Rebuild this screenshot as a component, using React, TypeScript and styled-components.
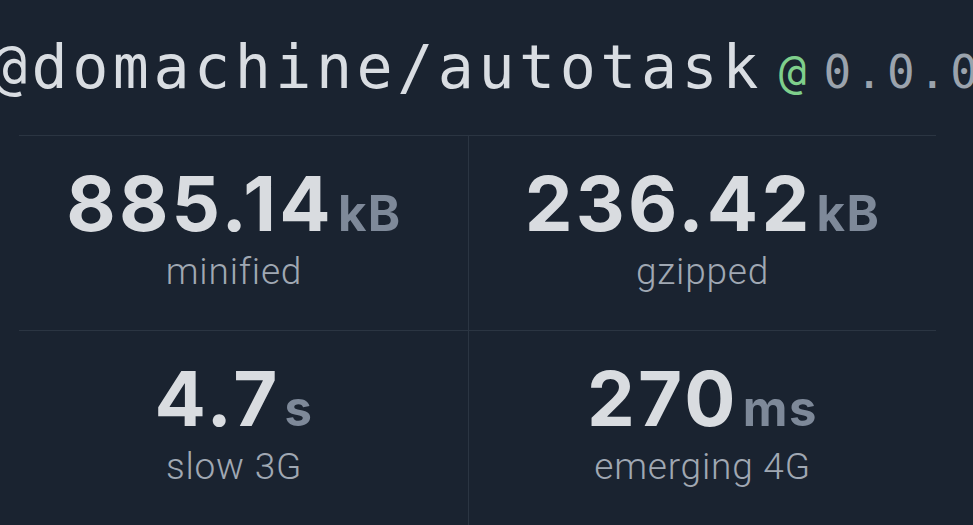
import React from "react";
import styled, { createGlobalStyle } from "styled-components";

const Global = createGlobalStyle`
  html, body {
    margin: 0;
    padding: 0;
    background: #1a2330;
    overflow: hidden;
  }
  #root {
    width: 973px;
    height: 525px;
    overflow: hidden;
    background: #1a2330;
  }
`;

const Page = styled.div`
  width: 973px;
  height: 525px;
  overflow: hidden;
  background: #1a2330;
  display: flex;
  flex-direction: column;
`;

const Header = styled.h1`
  margin: 0;
  height: 136px;
  box-sizing: border-box;
  padding-top: 37px;
  display: flex;
  justify-content: center;
  align-items: baseline;
  white-space: nowrap;
  font-family: "DejaVu Sans Mono", "Liberation Mono", monospace;
  font-weight: 400;
`;

const PackageName = styled.span`
  flex: none;
  font-size: 60px;
  line-height: 60px;
  letter-spacing: 4.5px;
  color: #d9dde2;
`;

const Separator = styled.span`
  flex: none;
  font-size: 46px;
  line-height: 46px;
  color: #7fcf8c;
  margin: 0 17px 0 16px;
`;

const Version = styled.span`
  flex: none;
  font-size: 46px;
  line-height: 46px;
  letter-spacing: 4px;
  color: #9ba3ad;
`;

const Stats = styled.div`
  width: 936px;
  display: flex;
  flex-direction: column;
`;

const Divider = styled.div`
  height: 1px;
  margin-left: 19px;
  background: #2b3542;
`;

const Row = styled.div`
  display: grid;
  grid-template-columns: 468px 468px;
  height: 194px;
`;

const Cell = styled.div<{ $divided?: boolean }>`
  display: flex;
  flex-direction: column;
  align-items: center;
  padding-top: 29px;
  gap: 9px;
  box-sizing: border-box;
  border-left: ${(p) => (p.$divided ? "1px solid #2b3542" : "none")};
`;

const Value = styled.div`
  display: flex;
  align-items: baseline;
  gap: 4px;
  font-family: Inter, "Noto Sans", sans-serif;
  font-weight: 700;
`;

const Number = styled.span`
  font-size: 76px;
  line-height: 76px;
  color: #d9dce0;
  letter-spacing: 3.2px;
`;

const Unit = styled.span`
  font-size: 49px;
  line-height: 49px;
  color: #7e8999;
  letter-spacing: 1.5px;
`;

const Label = styled.div`
  font-family: Roboto, "Noto Sans", sans-serif;
  font-size: 37px;
  line-height: 44px;
  font-weight: 300;
  color: #a0a8b3;
  letter-spacing: 0.8px;
`;

type Stat = { value: string; unit: string; label: string };

const rows: Stat[][] = [
  [
    { value: "885.14", unit: "kB", label: "minified" },
    { value: "236.42", unit: "kB", label: "gzipped" },
  ],
  [
    { value: "4.7", unit: "s", label: "slow 3G" },
    { value: "270", unit: "ms", label: "emerging 4G" },
  ],
];

export default function App() {
  return (
    <Page>
      <Global />
      <Header>
        <PackageName>@domachine/autotask</PackageName>
        <Separator>@</Separator>
        <Version>0.0.0</Version>
      </Header>
      <Stats>
        {rows.map((row, i) => (
          <React.Fragment key={i}>
            <Divider />
            <Row>
              {row.map((s, j) => (
                <Cell key={s.label} $divided={j === 1}>
                  <Value>
                    <Number>{s.value}</Number>
                    <Unit>{s.unit}</Unit>
                  </Value>
                  <Label>{s.label}</Label>
                </Cell>
              ))}
            </Row>
          </React.Fragment>
        ))}
      </Stats>
    </Page>
  );
}
